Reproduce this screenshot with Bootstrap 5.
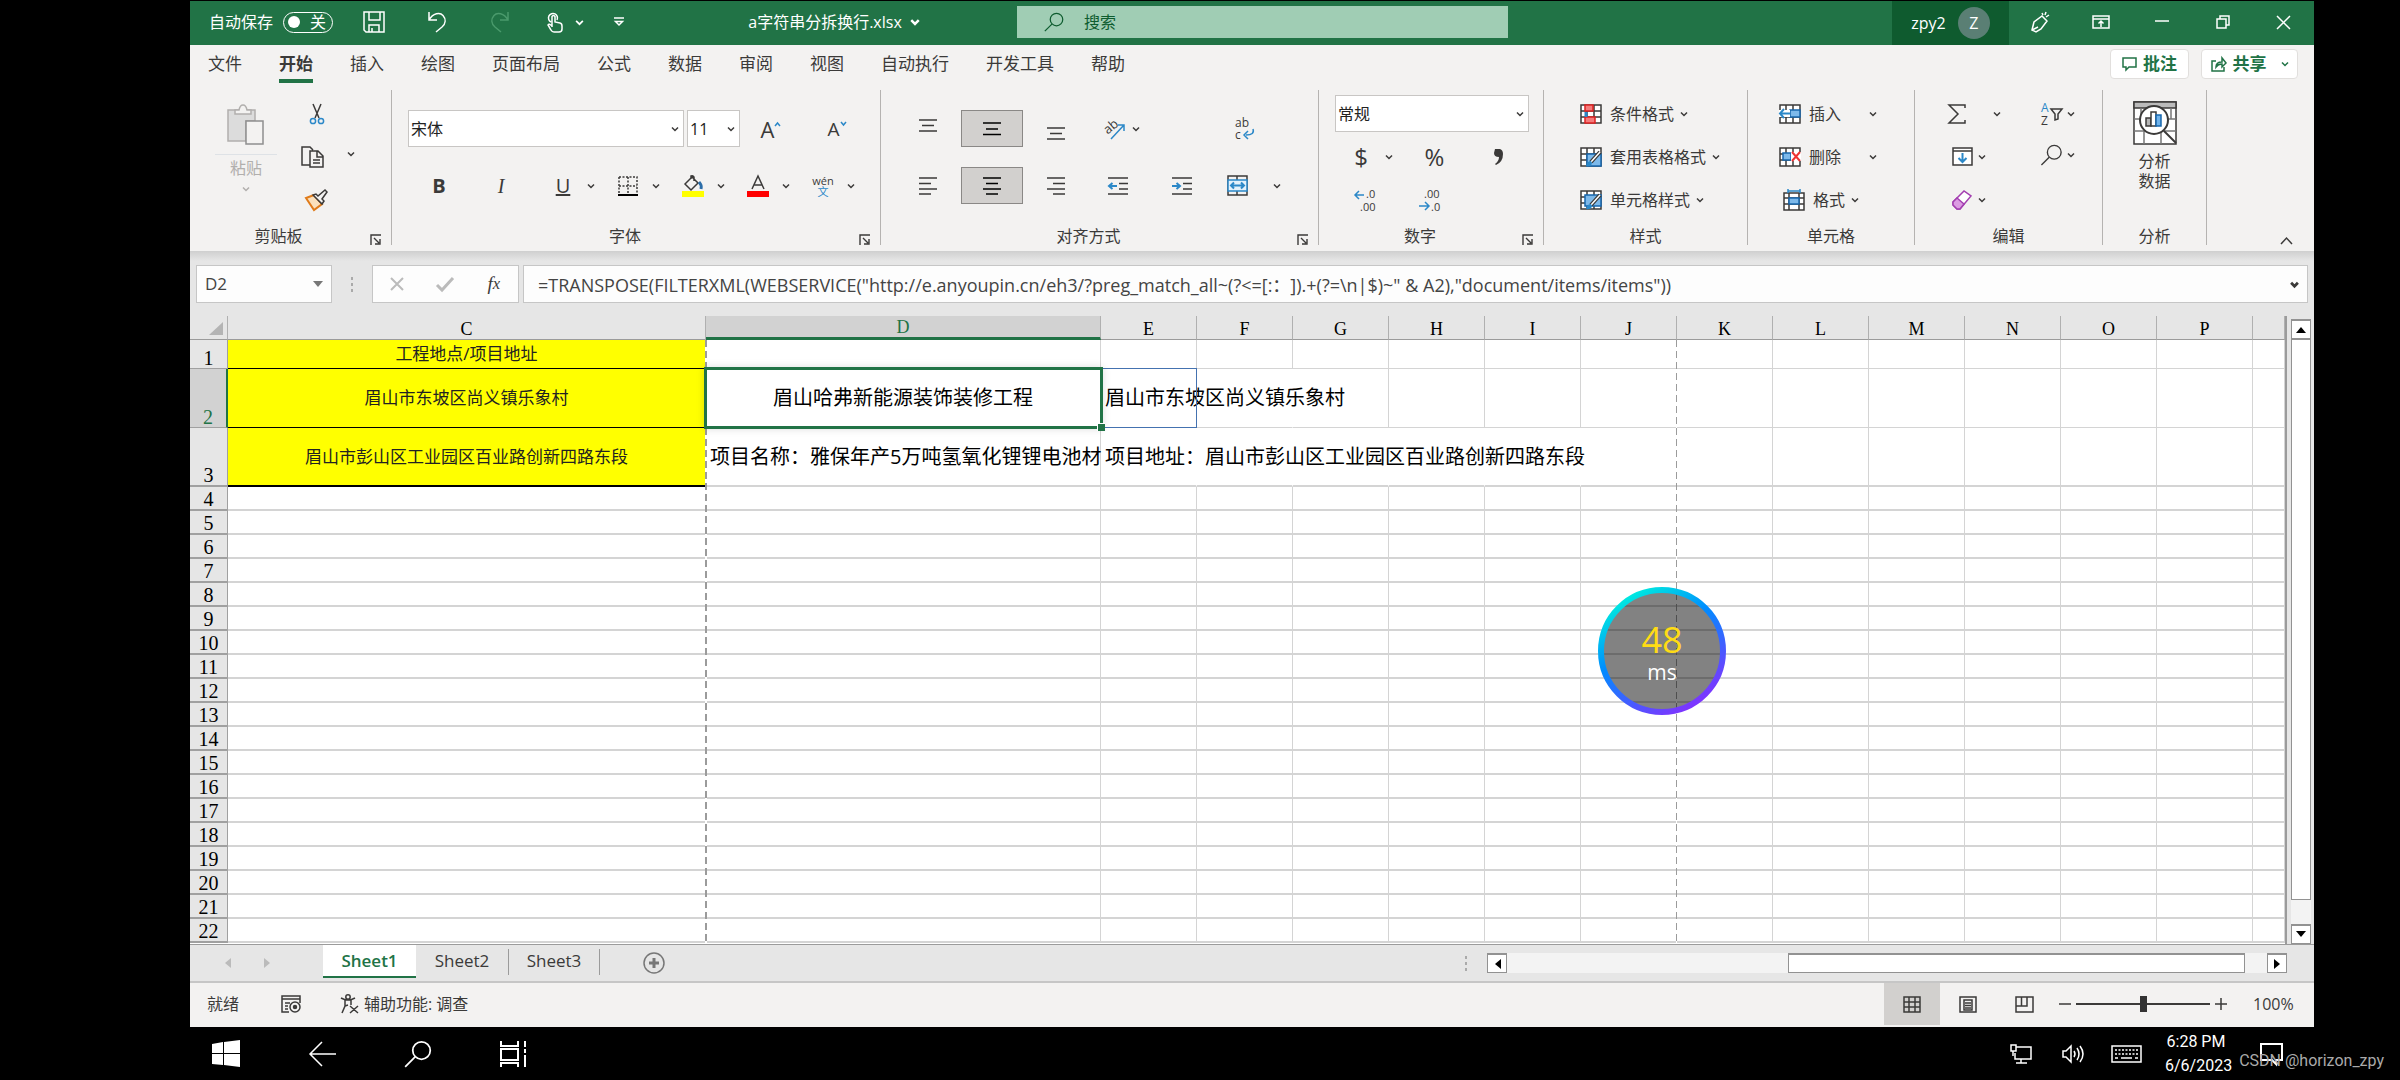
<!DOCTYPE html>
<html lang="zh-CN">
<head>
<meta charset="utf-8">
<meta name="viewport" content="width=device-width, initial-scale=1">
<title>a字符串分拆换行.xlsx</title>
<link href="https://cdn.jsdelivr.net/npm/bootstrap@5.3.0/dist/css/bootstrap.min.css" rel="stylesheet">
<style>
:root{--xl:#217346;--ink:#3b3a39;--line:#d4d4d4;--chrome:#e6e6e6;--blue:#2b88c8}
body{background:#000;font-family:"Open Sans","Noto Sans CJK SC",sans-serif;font-size:16px;line-height:18px;color:var(--ink);overflow:hidden}
button,select,input{font:inherit;color:inherit}
svg{display:block;flex:none;fill:none;stroke:currentColor;stroke-width:1.5;overflow:visible}
.plain{border:0;background:none;padding:0;display:flex;align-items:center;justify-content:center}
.desk{min-height:100vh;padding-top:1px}
.appwin{margin:0 86px 0 190px;background:#f3f2f1;flex:1;min-height:0}
/* title bar */
.titlebar{background:var(--xl);color:#fff;height:44px;flex:none;padding-bottom:2px}
.tleft{width:827px;padding-left:19px;flex:none}
.tbtn{width:63px;height:42px}
.toggle{width:50px;height:21px;border:1px solid #fff;border-radius:11px;margin:0 9px 0 10px;padding:0 6px 0 4px}
.toggle i{width:12px;height:12px;border-radius:50%;background:#fff}
.slim{width:32px;height:42px}
.slimc{width:16px;height:42px}
.seek{width:491px;height:32px;background:#a0cdb4;color:#0e5c2f;padding-left:27px;gap:20px}
.seek input{background:none;border:0;outline:0;padding:0;flex:1;height:30px}
.seek input::placeholder{color:#0e5c2f;opacity:1}
.acct{background:#0f5b2f;width:117px;gap:12px}
.avatar{width:32px;height:32px;border-radius:50%;background:#5a7f74}
.wbtn{width:61px;height:42px}
.winctl{height:44px;align-self:flex-start}
/* tabs */
.tabs{height:45px;flex:none;padding:0 16px 0 18px}
.tabs nav{gap:37px}
.tabs nav a{font-size:17px;line-height:38px;color:var(--ink);text-decoration:none;height:38px}
.tabs nav a.on{font-weight:700;border-bottom:4px solid var(--xl)}
.pill{background:#fff;border:1px solid #e1dfdd;border-radius:4px;height:30px;color:var(--xl);font-weight:700;font-size:17px;gap:6px}
/* ribbon */
.ribbon{height:161px;flex:none}
.grp{height:155px;border-right:1px solid #b5b3b1;position:relative;flex:none;padding-top:2px}
.grp.wide{padding-top:20px}
.cap{position:absolute;left:0;right:0;bottom:0;height:18px;text-align:center}
.launch{position:absolute;right:10px;bottom:0}
.r43{height:43px;display:flex;align-items:center}
.r37{height:37px;display:flex;align-items:center}
.b62{width:62px;height:37px}
.b32{width:32px;height:37px}
.b24{width:24px;height:37px}
.on62{background:#d2d0ce;border:1px solid #8a8886;color:#000}
.combo{position:relative;height:37px;border:1px solid #c8c6c4;background:#fff}
.combo select{appearance:none;border:0;background:none;width:100%;height:35px;padding:0 2px;outline:0;color:#222}
.combo svg{position:absolute;right:4px;top:14px;pointer-events:none}
.lbl{gap:8px}
.lbl .cv{margin-left:-2px}
/* formula bar */
.fbar{background:var(--chrome);background-image:linear-gradient(#cfcfcf,#e6e6e6 10px);height:65px;flex:none;padding:14px 6px 0}
.fbox{height:38px;border:1px solid #c6c6c6;background:#fdfdfd}
.fbox input{border:0;background:none;outline:0;padding:0;min-width:0}
.ftext{font-size:17px;color:#444}
.formula{font-size:18px;text-spacing-trim:space-all}
/* grid */
.sheetarea{background:var(--chrome);flex:1;min-height:0}
.gridwrap{position:relative;flex:1;min-width:0;overflow:hidden;border-right:2px solid #9b9b9b;background:#fff}
.cells{table-layout:fixed;border-collapse:separate;border-spacing:0;width:100%;color:#000}
.cells th,.cells td{padding:0;border-right:1px solid var(--line);border-bottom:2px solid var(--line);white-space:nowrap;font-weight:400;vertical-align:middle;line-height:20px}
.cells thead th{height:24px;background:var(--chrome);font:18px/20px "Liberation Serif",serif;text-align:center;vertical-align:bottom;border-right-color:#b0b0b0;border-bottom:1px solid #9b9b9b}
.cells tbody th{background:var(--chrome);font:20px/20px "Liberation Serif",serif;text-align:center;vertical-align:bottom;border-color:#a0a0a0}
.cells tbody tr{height:24px}
.cells tr.r1{height:29px}.cells tr.r2{height:59px}.cells tr.r3{height:59px}
.cells tr.r1>*,.cells tr.r2>*{border-bottom-width:1px}
.cells .yel{background:#ff0;border-bottom-color:#000;border-right-color:#ff0;font-size:17px;text-align:center;color:#222}
.cells .big{font-size:20px;padding-left:4px}
.cells .open{border-right-color:transparent}
.cells thead th.selc{background:#d2d2d2;color:var(--xl);border-bottom:3px solid var(--xl)}
.cells tbody th.selr{background:#d2d2d2;color:var(--xl);border-right:2px solid var(--xl)}
.brk{position:absolute;top:24px;bottom:0;width:2px;background:repeating-linear-gradient(#9b9b9b 0 7px,#fff 7px 11px)}
.brk.thin{width:1px}
.selbox{position:absolute;left:514px;top:51px;width:399px;height:62px;border:3px solid var(--xl);box-shadow:0 0 8px #0002}
.selbox::after{content:"";position:absolute;right:-5px;bottom:-5px;width:8px;height:8px;background:var(--xl);border:solid #fff;border-width:1px 0 0 1px}
.spill{position:absolute;left:912px;top:52px;width:95px;height:60px;border:1px solid #4472b0;border-left:0}
.vbar{width:20px;margin:3px 3px 0 4px;background:#f3f3f3}
.sbtn{background:#fff;border:1px solid #929292;border-top-width:2px;width:20px;height:20px;flex:none}
.vthumb{background:#fff;border:1px solid #929292;height:561px}
/* sheet tabs */
.strip{background:var(--chrome);border-top:1px solid #9b9b9b;border-bottom:2px solid #c6c6c6;height:39px;flex:none;font-size:17px}
.stab{height:33px;width:92px;text-align:center;line-height:31px;color:var(--ink);text-decoration:none}
.stab.on{width:93px;background:#fff;color:var(--xl);font-weight:600;border-bottom:2px solid var(--xl)}
.sep{width:1px;height:26px;background:#9b9b9b}
.hbar{width:800px;height:20px;background:#f3f3f3;margin-right:27px}
.hthumb{background:#fff;border:1px solid #929292;border-top-width:2px;width:457px;height:20px}
.dots{width:2px;background:repeating-linear-gradient(#aaa 0 3px,transparent 3px 6px);height:15px}
/* status */
.status{height:44px;flex:none;padding-left:17px;padding-bottom:2px}
.vbtn{width:56px;height:42px}
.zoomr{appearance:none;width:134px;height:16px;background:linear-gradient(var(--ink),var(--ink)) center/100% 2px no-repeat;margin:0 5px}
.zoomr::-webkit-slider-thumb{appearance:none;width:7px;height:16px;background:#333}
/* task bar */
.taskbar{height:53px;flex:none;color:#fff;padding:0 117px 0 178px}
.tk{width:96px;height:52px}
.clock{font-size:16px;line-height:24px;width:62px;text-align:center;font-family:Roboto,sans-serif}
.ping{position:absolute;left:1598px;top:587px;width:128px;height:128px;border-radius:50%;padding-top:6px}
.ping svg{position:absolute;left:0;top:0}
.ping b{position:relative;font-weight:400;font-size:36px;line-height:36px;color:#ffdc14}
.ping em{position:relative;font-style:normal;font-size:21px;line-height:28px;color:#fff}
.wmark{position:absolute;right:16px;bottom:9px;color:#aaa;font-family:Roboto,sans-serif;font-size:16px;line-height:20px}
</style>
<script src="https://cdn.jsdelivr.net/npm/bootstrap@5.3.0/dist/js/bootstrap.bundle.min.js"></script>
</head>
<body>
<svg width="0" height="0" class="position-absolute">
<symbol id="cv" viewBox="0 0 8 8"><path d="M1 2.500l3 3 3-3"/></symbol>
<symbol id="ln" viewBox="0 0 11 11"><path d="M1 11V1h10M4 4l5 5M10 5v5H5" stroke-width="1.400"/></symbol>
<symbol id="gd" viewBox="0 0 22 20"><path d="M1 1h20v18H1zM1 7h20M1 13h20M7 1v18M14 1v18" fill="#fff"/></symbol>
<symbol id="mg" viewBox="0 0 24 24"><circle cx="15" cy="9" r="7.500"/><path d="M9.500 14.500L1 23"/></symbol>
</svg>

<div class="desk d-flex flex-column vh-100 position-relative">
<main class="appwin d-flex flex-column">

<header class="titlebar d-flex align-items-center">
  <div class="tleft d-flex align-items-center">
    <span>自动保存</span>
    <button class="plain toggle justify-content-between" aria-label="自动保存"><i></i><span>关</span></button>
    <button class="plain tbtn" aria-label="保存"><svg width="22" height="22"><path d="M1 1h20v20H3l-2-2zM6 1v8h11V1M6 21v-7h10v7M9 21v-4"/></svg></button>
    <button class="plain tbtn" aria-label="撤消"><svg width="20" height="22"><path d="M2 1v8h8M2 9C6 2 13 1 16 4.500s3 8-1 11.500l-6 5"/></svg></button>
    <button class="plain tbtn" aria-label="恢复" style="color:#4a9a6c"><svg width="20" height="22"><path d="M18 1v8h-8M18 9C14 2 7 1 4 4.500s-3 8 1 11.500l6 5"/></svg></button>
    <button class="plain slim ms-2" aria-label="触摸模式"><svg width="18" height="22"><path d="M5 11a4.500 4.500 0 1 1 6-2M6 16V5.500a1.600 1.600 0 0 1 3 0V11l5 1q2 .5 2 3v3q0 3-3 3H8q-2 0-3-2l-3-5q1-2 4 1"/></svg></button>
    <button class="plain slimc" aria-label="更多"><svg width="9" height="9"><use href="#cv"/></svg></button>
    <button class="plain slim mx-3 px-0" aria-label="自定义"><svg width="10" height="10"><path d="M0 1h10M1.500 4.500L5 8l3.500-3.500z"/></svg></button>
    <button class="plain flex-fill gap-2">a字符串分拆换行.xlsx<svg width="10" height="10" style="stroke-width:2"><use href="#cv"/></svg></button>
  </div>
  <label class="seek d-flex align-items-center"><svg width="20" height="20"><use href="#mg"/></svg><input type="text" placeholder="搜索" aria-label="搜索"></label>
  <div class="ms-auto d-flex winctl">
    <button class="plain acct">zpy2<span class="avatar d-flex align-items-center justify-content-center">Z</span></button>
    <button class="plain wbtn" aria-label="墨迹"><svg width="20" height="22"><path d="M2 19l2-8L12 5l5 5-6 8-5 3-4-2zM2 19l6-3M12 5l5 5M12 2l1 2M16 1l-1 3M19 4l-3 2"/></svg></button>
    <button class="plain wbtn" aria-label="功能区显示选项"><svg width="18" height="14"><path d="M1 1h16v12H1zM1 4h16M9 12V6M6.500 8.500L9 6l2.500 2.500"/></svg></button>
    <button class="plain wbtn" aria-label="最小化"><svg width="14" height="4"><path d="M0 1h14"/></svg></button>
    <button class="plain wbtn" aria-label="还原"><svg width="14" height="14"><path d="M1 4h9v9H1zM4 4V1h9v9h-3"/></svg></button>
    <button class="plain wbtn" aria-label="关闭"><svg width="15" height="15"><path d="M1 1l13 13M14 1L1 14"/></svg></button>
  </div>
</header>

<div class="tabs d-flex">
  <nav class="d-flex">
    <a href="#">文件</a><a href="#" class="on">开始</a><a href="#">插入</a><a href="#">绘图</a><a href="#">页面布局</a><a href="#">公式</a><a href="#">数据</a><a href="#">审阅</a><a href="#">视图</a><a href="#">自动执行</a><a href="#">开发工具</a><a href="#">帮助</a>
  </nav>
  <div class="ms-auto d-flex gap-2 pt-1">
    <button class="plain pill" style="width:79px"><svg width="15" height="14"><path d="M1 1h13v9H7l-3 3v-3H1z"/></svg>批注</button>
    <button class="plain pill ms-1" style="width:97px"><svg width="16" height="15"><path d="M5 4H1v10h12v-4M5 10q0-5 6-5V1l4 5-4 4V7q-4 0-6 3z"/></svg>共享<svg width="8" height="8" class="ms-2"><use href="#cv"/></svg></button>
  </div>
</div>

<div class="ribbon d-flex position-relative">
  <section class="grp" style="width:202px">
    <div class="d-flex">
      <button class="plain flex-column justify-content-start" style="width:62px;margin:12px 0 0 25px;color:#b1afad"><svg width="38" height="42"><path d="M6 6h22v11H19v20H1V6z" fill="#dcdcdc"/><path d="M8 6h4q1-5 4-5t4 5h4v4H8z" fill="#f3f2f1"/><path d="M19 17h17v23H19z" fill="#f3f2f1" stroke="#8f8f8f"/></svg><span class="border-top w-100 mt-2 pt-1">粘贴</span><svg width="8" height="8" class="mt-2"><use href="#cv"/></svg></button>
      <div style="margin-left:24px">
        <button class="plain r43" style="width:32px" aria-label="剪切"><svg width="16" height="22"><path d="M4 1l6 14M12 1L6 15"/><g stroke="#2b88c8"><circle cx="4" cy="18" r="2.600"/><circle cx="12" cy="18" r="2.600"/></g></svg></button>
        <div class="d-flex"><button class="plain r43" style="width:32px;margin-left:-4px" aria-label="复制"><svg width="24" height="22"><path d="M9 19H1V1h8l3 3M9 5h8l5 5v11H9zM16 5v6h6M12 14h7M12 17h7" /></svg></button><button class="plain r43 b24" style="margin-left:10px" aria-label="复制选项"><svg width="8" height="8"><use href="#cv"/></svg></button></div>
        <button class="plain r43" style="width:32px" aria-label="格式刷"><svg width="24" height="22"><path d="M1 9l8 12 8-6-8-9z" fill="#fbe0bb" stroke="#e07b1a" stroke-width="2"/><path d="M8 6l9 9 2-3-2-2 5-7-2-2-7 6-2-2z" fill="#f3f2f1"/></svg></button>
      </div>
    </div>
    <div class="cap pe-4">剪贴板</div><svg class="launch" width="11" height="11"><use href="#ln"/></svg>
  </section>

  <section class="grp wide" style="width:489px;padding-left:16px">
    <div class="r37">
      <div class="combo" style="width:276px"><select aria-label="字体"><option>宋体</option></select><svg width="8" height="8"><use href="#cv"/></svg></div>
      <div class="combo" style="width:53px;margin-left:3px"><select aria-label="字号"><option>11</option></select><svg width="8" height="8"><use href="#cv"/></svg></div>
      <button class="plain b62" style="font-size:22px" aria-label="增大字号">A<svg width="7" height="14"><path d="M1 4l2.500-3L6 4" stroke="#2b88c8"/></svg></button>
      <button class="plain b62 ms-1" style="font-size:19px" aria-label="减小字号">A<svg width="7" height="14"><path d="M1 0l2.500 3L6 0" stroke="#2b88c8"/></svg></button>
    </div>
    <div class="r37" style="margin-top:20px">
      <button class="plain b62 fw-bold fs-5">B</button>
      <button class="plain b62 fst-italic fs-5" style="font-family:'Liberation Serif',serif">I</button>
      <div class="d-flex" style="gap:9px;margin-left:15px">
        <div class="d-flex"><button class="plain b32 fs-5 text-decoration-underline">U</button><button class="plain b24" aria-label="下划线"><svg width="8" height="8"><use href="#cv"/></svg></button></div>
        <div class="d-flex"><button class="plain b32" aria-label="边框"><svg width="20" height="20"><path d="M1 1h18v17M1 1v17M10 1v17M1 10h18" stroke-dasharray="2 1.500"/><path d="M0 19h20" stroke="#000" stroke-width="2"/></svg></button><button class="plain b24" aria-label="边框选项"><svg width="8" height="8"><use href="#cv"/></svg></button></div>
        <div class="d-flex"><button class="plain b32" aria-label="填充颜色"><svg width="22" height="22"><path d="M3 9l7-7 6 6-7 7zM9 4V1q2-1 3 1v4"/><path d="M17 7q3 3 2 7" stroke="#2b6da8" stroke-width="3"/><path d="M0 16h22v6H0z" fill="#ff0" stroke="none"/></svg></button><button class="plain b24" aria-label="填充选项"><svg width="8" height="8"><use href="#cv"/></svg></button></div>
        <div class="d-flex"><button class="plain b32" aria-label="字体颜色"><svg width="22" height="22"><path d="M5 14l6-13 6 13M7.500 10h7"/><path d="M0 16h22v6H0z" fill="#f00" stroke="none"/></svg></button><button class="plain b24" aria-label="颜色选项"><svg width="8" height="8"><use href="#cv"/></svg></button></div>
        <div class="d-flex"><button class="plain b32 flex-column" style="font-size:11px;line-height:11px">wén<span style="color:#2b88c8">文</span></button><button class="plain b24" aria-label="拼音选项"><svg width="8" height="8"><use href="#cv"/></svg></button></div>
      </div>
    </div>
    <div class="cap" style="right:22px">字体</div><svg class="launch" width="11" height="11"><use href="#ln"/></svg>
  </section>

  <section class="grp wide" style="width:438px;padding-left:16px">
    <div class="r37" style="gap:2px">
      <button class="plain b62" aria-label="顶端对齐"><svg width="18" height="20" class="mb-1"><path d="M0 3h18M3 8.500h12M0 14h18"/></svg></button>
      <button class="plain b62 on62" aria-label="垂直居中"><svg width="18" height="20"><path d="M0 4h18M3 10h12M0 15.500h18"/></svg></button>
      <button class="plain b62" aria-label="底端对齐"><svg width="18" height="20" class="mt-1"><path d="M0 7h18M3 12.500h12M0 18h18"/></svg></button>
      <button class="plain b62 ps-1" aria-label="方向"><svg width="24" height="22"><text x="-1" y="12" font-size="13" fill="#3b3a39" stroke="none" transform="rotate(-40 8 8)">ab</text><path d="M7 21L20 7M14 7h6v6" stroke="#2b88c8"/></svg><svg width="8" height="8" class="ms-1"><use href="#cv"/></svg></button>
      <button class="plain b62" style="margin-left:60px" aria-label="自动换行"><svg width="20" height="22"><text x="1" y="9" font-size="12" fill="#3b3a39" stroke="none">ab</text><text x="1" y="21" font-size="12" fill="#3b3a39" stroke="none">c</text><path d="M19 11q2 6-7 6M14 13l-4 4 4 4" stroke="#2b88c8"/></svg></button>
    </div>
    <div class="r37" style="margin-top:20px;gap:2px">
      <button class="plain b62" aria-label="左对齐"><svg width="18" height="18"><path d="M0 1h18M0 6.500h12M0 12h18M0 17h12"/></svg></button>
      <button class="plain b62 on62" aria-label="居中"><svg width="18" height="18"><path d="M0 1h18M3 6.500h12M0 12h18M3 17h12"/></svg></button>
      <button class="plain b62" aria-label="右对齐"><svg width="18" height="18"><path d="M0 1h18M6 6.500h12M0 12h18M6 17h12"/></svg></button>
      <button class="plain b62 pe-1" aria-label="减少缩进"><svg width="20" height="18"><path d="M0 1h20M11 6.500h9M11 12h9M0 17h20"/><path d="M9 9H1M4.500 6L1 9l3.500 3" stroke="#2b88c8" stroke-width="2"/></svg></button>
      <button class="plain b62 pe-1" aria-label="增加缩进"><svg width="20" height="18"><path d="M0 1h20M11 6.500h9M11 12h9M0 17h20"/><path d="M0 9h8M4.500 6L8 9l-3.500 3" stroke="#2b88c8" stroke-width="2"/></svg></button>
      <button class="plain b32 ms-1" aria-label="合并"><svg width="21" height="21"><path d="M1 1h19v19H1zM10 1v4M10 16v4" /><path d="M1 5h19v11H1z" fill="#e2f1fb" stroke="#2b88c8"/><path d="M4 10.500h13M7 7.500l-3 3 3 3M14 7.500l3 3-3 3" stroke="#2b88c8" stroke-width="2"/></svg></button>
      <button class="plain b24" style="margin-left:10px" aria-label="合并选项"><svg width="8" height="8"><use href="#cv"/></svg></button>
    </div>
    <div class="cap" style="right:22px">对齐方式</div><svg class="launch" width="11" height="11"><use href="#ln"/></svg>
  </section>

  <section class="grp" style="width:225px;padding-left:16px">
    <div class="r43"><div class="combo" style="width:194px"><select aria-label="数字格式"><option>常规</option></select><svg width="8" height="8"><use href="#cv"/></svg></div></div>
    <div class="r43 fs-4"><button class="plain" style="width:52px">$</button><button class="plain" style="width:4px" aria-label="货币"><svg width="8" height="8"><use href="#cv"/></svg></button><button class="plain" style="width:87px">%</button><button class="plain" style="width:40px" aria-label="千位分隔"><svg width="10" height="18"><path d="M2 1h5q3 1 3 5 0 8-7 11l-1-1q4-3 4-7-5 0-5-4z" fill="currentColor" stroke="none"/></svg></button></div>
    <div class="r43"><button class="plain" style="width:62px" aria-label="增加小数"><svg width="22" height="22"><path d="M9 6H1M4 2L0 6l4 4" stroke="#2b88c8"/><g fill="#3b3a39" stroke="none" font-size="11"><text x="11" y="9">.0</text><text x="5" y="22">.00</text></g></svg></button><button class="plain" style="width:66px" aria-label="减少小数"><svg width="22" height="22"><path d="M0 17h9M6 13l4 4-4 4" stroke="#2b88c8"/><g fill="#3b3a39" stroke="none" font-size="11"><text x="5" y="9">.00</text><text x="12" y="22">.0</text></g></svg></button></div>
    <div class="cap" style="right:22px">数字</div><svg class="launch" width="11" height="11"><use href="#ln"/></svg>
  </section>

  <section class="grp" style="width:204px;padding-left:36px">
    <button class="plain r43 lbl"><svg width="22" height="20"><use href="#gd"/><path d="M5 1h8v6H5zM5 13h10v6H5z" fill="#f47c7c" stroke="#d22"/><path d="M6 8v5" stroke="#2b88c8" stroke-width="3"/></svg>条件格式<svg width="8" height="8" class="cv"><use href="#cv"/></svg></button>
    <button class="plain r43 lbl"><svg width="22" height="20"><use href="#gd"/><path d="M7 7h14v12H7z" fill="#7db9ea" stroke="#1767ad"/><path d="M20 5l-9 10" stroke="#3b3a39" stroke-width="4"/><path d="M20 5l-9 10" stroke="#fff"/><path d="M11 14q-4 0-5 5 5 1 6-3z" fill="#2b88c8" stroke="none"/></svg>套用表格格式<svg width="8" height="8" class="cv"><use href="#cv"/></svg></button>
    <button class="plain r43 lbl"><svg width="22" height="20"><use href="#gd"/><path d="M5 5h16v11H5z" fill="#7db9ea" stroke="#1767ad"/><path d="M20 5l-9 10" stroke="#3b3a39" stroke-width="4"/><path d="M20 5l-9 10" stroke="#fff"/><path d="M11 14q-4 0-5 5 5 1 6-3z" fill="#2b88c8" stroke="none"/></svg>单元格样式<svg width="8" height="8" class="cv"><use href="#cv"/></svg></button>
    <div class="cap">样式</div>
  </section>

  <section class="grp" style="width:167px;padding-left:31px">
    <button class="plain r43 lbl"><svg width="22" height="20"><use href="#gd"/><path d="M11 6h10v7H11z" fill="#7db9ea" stroke="#1767ad"/><path d="M0 6h11v7H0z" fill="#fff" stroke="none"/><path d="M11 9.500H1M5 5L1 9.500 5 14" stroke="#2b88c8" stroke-width="2"/></svg>插入<svg width="8" height="8" style="margin-left:20px"><use href="#cv"/></svg></button>
    <button class="plain r43 lbl"><svg width="22" height="20"><use href="#gd"/><path d="M4 6h8v7H4z" fill="#7db9ea" stroke="#1767ad"/><path d="M12 5h10v9H12z" fill="#fff" stroke="none"/><path d="M13 5l8 9M21 5l-8 9" stroke="#e33" stroke-width="2"/></svg>删除<svg width="8" height="8" style="margin-left:20px"><use href="#cv"/></svg></button>
    <button class="plain r43 lbl ms-1"><svg width="22" height="22"><path d="M1 4h20v17H1zM1 9h20M1 15h20M6 4v17M16 4v17" fill="#fff"/><path d="M6 9h10v6H6z" fill="#7db9ea" stroke="#1767ad"/><path d="M5 0v4M17 0v4M5 2h12" stroke="#2b88c8"/></svg>格式<svg width="8" height="8" class="cv"><use href="#cv"/></svg></button>
    <div class="cap">单元格</div>
  </section>

  <section class="grp d-flex" style="width:188px;padding-left:33px">
    <div style="width:92px">
      <button class="plain r43" aria-label="求和"><svg width="18" height="20"><path d="M17 4V1H1l9 9-9 9h16v-3"/></svg><svg width="8" height="8" style="margin-left:27px"><use href="#cv"/></svg></button>
      <button class="plain r43" aria-label="填充"><svg width="22" height="19" class="ms-1"><path d="M1 1h19v17H1zM1 4h19" fill="#fff"/><path d="M10.500 6v9M6.500 11l4 4 4-4" stroke="#2b88c8" stroke-width="2"/></svg><svg width="8" height="8" class="ms-1"><use href="#cv"/></svg></button>
      <button class="plain r43" aria-label="清除"><svg width="20" height="20" class="ms-1"><path d="M1 12L12 1l7 5L8 19H5l-4-4z" fill="#fff" stroke="#a33fb0"/><path d="M1 12l4-4 7 6-4 5H5l-4-4z" fill="#dc9be3" stroke="#a33fb0"/></svg><svg width="8" height="8" style="margin-left:6px"><use href="#cv"/></svg></button>
    </div>
    <div>
      <button class="plain r43" aria-label="排序和筛选"><svg width="23" height="22"><g stroke="none" font-size="12"><text x="1" y="9" fill="#2b88c8">A</text><text x="1" y="22" fill="#3b3a39">Z</text></g><path d="M11 6h11l-4 5v5l-3 1v-6z"/></svg><svg width="8" height="8" class="ms-1"><use href="#cv"/></svg></button>
      <button class="plain r43 pb-1" aria-label="查找"><svg width="23" height="22"><use href="#mg"/></svg><svg width="8" height="8" class="ms-1"><use href="#cv"/></svg></button>
    </div>
    <div class="cap">编辑</div>
  </section>

  <section class="grp" style="width:104px">
    <button class="plain flex-column mx-auto" style="margin-top:9px;line-height:20px"><svg width="44" height="44" style="margin-bottom:6px"><path d="M1 1h42v42H1z" fill="#fff"/><path d="M1 1h42v6H1z" fill="#bbb"/><path d="M1 18h42M1 30h42M11 30v13M28 30v13M8 7v11M38 7v11" stroke="#777"/><circle cx="21" cy="19" r="14" fill="#fff" stroke-width="2"/><path d="M31 30l12 12" stroke-width="2"/><path d="M13 17h5v8h-5z" fill="#b5b5b5"/><path d="M18 11h5v14h-5z" fill="#fff"/><path d="M23 14h5v11h-5z" fill="#6fb2ea" stroke="#1767ad"/></svg>分析<br>数据</button>
    <div class="cap">分析</div>
  </section>
  <button class="plain ms-auto align-self-end" style="width:56px;height:20px" aria-label="折叠功能区"><svg width="13" height="10"><path d="M1 8l5.500-6L12 8"/></svg></button>
</div>

<div class="fbar d-flex">
  <div class="fbox d-flex align-items-center ps-2 pe-2" style="width:136px"><input class="w-100 ftext" value="D2" aria-label="名称框"><svg width="10" height="8"><path d="M0 1h10L5 7z" fill="#777" stroke="none"/></svg></div>
  <div class="dots" style="margin:12px 19px 0"></div>
  <div class="fbox d-flex" style="width:147px">
    <button class="plain w-100" aria-label="取消"><svg width="14" height="14" color="#bbb"><path d="M1 1l12 12M13 1L1 13" stroke-width="2"/></svg></button>
    <button class="plain w-100" aria-label="输入"><svg width="18" height="14" color="#bbb"><path d="M1 8l5 5L17 1" stroke-width="3"/></svg></button>
    <button class="plain w-100 fst-italic" style="font-family:'Liberation Serif',serif;font-size:19px" aria-label="插入函数">f<small>x</small></button>
  </div>
  <div class="fbox d-flex align-items-center flex-fill pe-2" style="margin-left:4px;padding-left:14px"><input class="flex-fill ftext formula" aria-label="编辑栏" value='=TRANSPOSE(FILTERXML(WEBSERVICE("http://e.anyoupin.cn/eh3/?preg_match_all~(?&lt;=[:：]).+(?=\n|$)~" &amp; A2),"document/items/items"))'><svg width="9" height="9" style="stroke-width:2.500"><use href="#cv"/></svg></div>
</div>

<div class="sheetarea d-flex">
  <div class="gridwrap">
    <table class="cells">
      <colgroup id="cols"></colgroup>
      <thead><tr id="heads"></tr></thead>
      <tbody id="rows"></tbody>
    </table>
    <div class="brk" style="left:515px"></div>
    <div class="brk thin" style="left:1486px"></div>
    <div class="spill"></div>
    <div class="selbox"></div>
  </div>
  <div class="vbar d-flex flex-column">
    <button class="plain sbtn" aria-label="向上"><svg width="10" height="7"><path d="M0 7l5-6 5 6z" fill="#000" stroke="none"/></svg></button>
    <div class="vthumb"></div>
    <button class="plain sbtn mt-auto" aria-label="向下"><svg width="10" height="7"><path d="M0 0h10L5 6z" fill="#000" stroke="none"/></svg></button>
  </div>
</div>

<div class="strip d-flex align-items-start">
  <div class="d-flex align-items-center" style="width:133px;height:35px;padding-left:35px;gap:33px;color:#bbb"><svg width="6" height="10"><path d="M6 0v10L0 5z" fill="currentColor" stroke="none"/></svg><svg width="6" height="10"><path d="M0 0v10l6-5z" fill="currentColor" stroke="none"/></svg></div>
  <a href="#" class="stab on">Sheet1</a><a href="#" class="stab">Sheet2</a><span class="sep mt-1"></span><a href="#" class="stab" style="width:90px">Sheet3</a><span class="sep mt-1"></span>
  <button class="plain" style="margin:7px 0 0 43px;color:#777" aria-label="新工作表"><svg width="22" height="22"><circle cx="11" cy="11" r="10"/><path d="M11 6v10M6 11h10" stroke-width="3"/></svg></button>
  <div class="ms-auto d-flex align-items-center" style="padding-top:8px">
    <div class="dots" style="margin-right:20px"></div>
    <div class="hbar d-flex">
      <button class="plain sbtn" aria-label="向左"><svg width="7" height="10"><path d="M7 0v10L1 5z" fill="#000" stroke="none"/></svg></button>
      <div class="hthumb ms-auto" style="margin-right:22px"></div>
      <button class="plain sbtn" aria-label="向右"><svg width="7" height="10"><path d="M0 0v10l6-5z" fill="#000" stroke="none"/></svg></button>
    </div>
  </div>
</div>

<footer class="status d-flex align-items-center">
  <span style="width:74px">就绪</span>
  <svg width="20" height="18"><path d="M8 17H1V1h18v7M1 4h18M4 8h5M4 11h3M4 14h3"/><circle cx="14" cy="12" r="5"/><circle cx="14" cy="12" r="1.500" fill="currentColor"/></svg>
  <svg width="20" height="20" style="margin:0 4px 0 39px"><circle cx="8" cy="3" r="2.200"/><path d="M1 4q7 4 14 0M5 6v6l-3 7M11 6v5M5 12l3-1M10 12l8 7M18 12l-8 7"/></svg>
  <span>辅助功能: 调查</span>
  <div class="ms-auto d-flex align-items-center">
    <button class="plain vbtn" style="background:#d2d0ce" aria-label="普通"><svg width="18" height="17"><path d="M1 1h16v15H1zM1 6h16M1 11h16M6 1v15M12 1v15"/></svg></button>
    <button class="plain vbtn" aria-label="页面布局"><svg width="18" height="17"><path d="M1 1h16v15H1zM5 4h8v10H5zM6 7h6M6 9.500h6M6 12h6"/></svg></button>
    <button class="plain vbtn" aria-label="分页预览"><svg width="19" height="17"><path d="M1 1h17v15H1zM1 10h11V1M6.500 1v9"/></svg></button>
    <button class="plain" style="margin-left:7px" aria-label="缩小"><svg width="12" height="12"><path d="M0 6h12"/></svg></button>
    <input type="range" class="zoomr" min="0" max="100" value="50" aria-label="缩放">
    <button class="plain" aria-label="放大"><svg width="12" height="12"><path d="M0 6h12M6 0v12"/></svg></button>
    <span style="width:87px;padding-left:26px">100%</span>
  </div>
</footer>
</main>

<div class="taskbar d-flex align-items-center">
  <button class="plain tk" aria-label="开始"><svg width="28" height="28"><path d="M0 4l11-2v11H0zM12 2l16-2v13H12zM0 14h11v11L0 24zM12 14h16v13l-16-2z" fill="#fff" stroke="none"/></svg></button>
  <button class="plain tk" aria-label="返回"><svg width="28" height="28"><path d="M28 14H2M14 2L2 14l12 12"/></svg></button>
  <button class="plain tk" aria-label="搜索"><svg width="28" height="28"><use href="#mg"/></svg></button>
  <button class="plain tk" aria-label="任务视图"><svg width="28" height="28"><path d="M1 1v5h17V1M1 9h17v11H1zM1 27v-4h17v4M25 1v6M25 15v12M25 9v4" stroke-width="2"/></svg></button>
  <div class="ms-auto d-flex align-items-center">
    <svg width="22" height="20"><path d="M6 3h15v12H5V9M11 15v4M6 19h11M1 1h5v6H1zM3 7v5"/></svg>
    <svg width="24" height="20" style="margin:0 25px 0 30px"><path d="M1 7h3l5-5v16l-5-5H1zM12 7q2 3 0 6M15 4q4 6 0 12M18 2q6 8 0 16"/></svg>
    <svg width="31" height="18"><path d="M1 1h29v16H1z"/><path d="M4 5h23M4 9h23" stroke-dasharray="2 1.500"/><path d="M4 13h3M10 13h11M24 13h3"/></svg>
    <time class="clock" style="margin:0 33px 0 23px">6:28 PM 6/6/2023</time>
    <svg width="23" height="22"><path d="M1 1h21v16h-6v4l-4-4H1z" stroke-width="2"/></svg>
  </div>
</div>

<div class="ping d-flex flex-column align-items-center justify-content-center">
  <svg width="128" height="128"><defs><linearGradient id="ring" x1="0.200" y1="0" x2="0.800" y2="1"><stop offset="0" stop-color="#00f5dc"/><stop offset=".4" stop-color="#008cff"/><stop offset="1" stop-color="#8a2cff"/></linearGradient></defs><circle cx="64" cy="64" r="61" fill="rgba(0,0,0,.49)" stroke="url(#ring)" stroke-width="6"/></svg>
  <b>48</b><em>ms</em>
</div>
<div class="wmark">CSDN @horizon_zpy</div>
</div>

<script>
const letters = [...'CDEFGHIJKLMNOP', ''];
const widths = [38, 478, 395, ...Array(12).fill(96)];
document.getElementById('cols').innerHTML = widths.map(w => `<col style="width:${w}px">`).join('') + '<col>';
document.getElementById('heads').innerHTML =
  '<th><svg width="14" height="13" class="ms-auto me-1 mb-1"><path d="M14 0v13H0z" fill="#b4b4b4" stroke="none"/></svg></th>' +
  letters.map(c => `<th${c === 'D' ? ' class="selc"' : ''}>${c}</th>`).join('');
const text = {
  C1: '工程地点/项目地址',
  C2: '眉山市东坡区尚义镇乐象村',
  D2: '眉山哈弗新能源装饰装修工程',
  E2: '眉山市东坡区尚义镇乐象村',
  C3: '眉山市彭山区工业园区百业路创新四路东段',
  D3: '项目名称：雅保年产5万吨氢氧化锂锂电池材',
  E3: '项目地址：眉山市彭山区工业园区百业路创新四路东段'
};
const open = ['E2', 'F2', 'E3', 'F3', 'G3', 'H3', 'I3'];
let html = '';
for (let r = 1; r <= 22; r++) {
  html += `<tr class="r${r}"><th${r === 2 ? ' class="selr"' : ''}>${r}</th>`;
  for (const c of letters) {
    const k = c + r, cls = [];
    if (c === 'C' && r < 4) cls.push('yel');
    else if (text[k]) cls.push('big');
    if (k === 'D2') cls.push('text-center', 'ps-0');
    if (open.includes(k)) cls.push('open');
    html += `<td class="${cls.join(' ')}">${text[k] || ''}</td>`;
  }
  html += '</tr>';
}
document.getElementById('rows').innerHTML = html;
</script>
</body>
</html>
